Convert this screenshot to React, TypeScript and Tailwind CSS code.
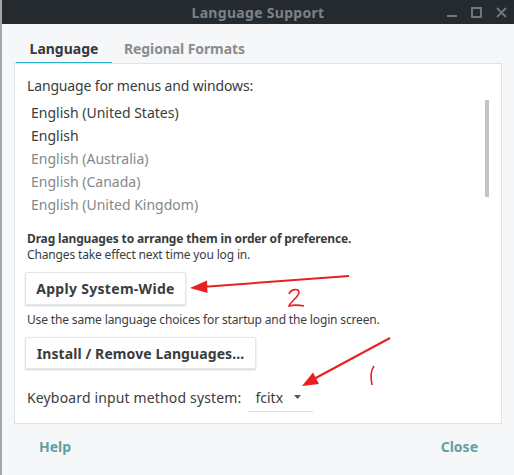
import { useState } from "react";

const languages = [
  { name: "English (United States)", active: true },
  { name: "English", active: true },
  { name: "English (Australia)", active: false },
  { name: "English (Canada)", active: false },
  { name: "English (United Kingdom)", active: false },
];

function WindowControls() {
  return (
    <div className="absolute right-0 top-0 h-[24px] flex items-center gap-[14px] pr-[7px]">
      <svg width="10" height="10" viewBox="0 0 10 10">
        <rect x="0" y="8" width="10" height="2" fill="#6f767b" />
      </svg>
      <svg width="11" height="11" viewBox="0 0 11 11">
        <rect x="1" y="1" width="9" height="9" fill="none" stroke="#6f767b" strokeWidth="2" />
      </svg>
      <svg width="11" height="11" viewBox="0 0 11 11">
        <path d="M1 1 L10 10 M10 1 L1 10" stroke="#6f767b" strokeWidth="2" />
      </svg>
    </div>
  );
}

function Annotations() {
  return (
    <svg
      className="absolute inset-0 pointer-events-none"
      width="514"
      height="475"
      viewBox="0 0 514 475"
    >
      <path d="M347 276 L200 287" stroke="#e8201f" strokeWidth="2" fill="none" />
      <polygon points="188,288 205,280.5 205.5,293" fill="#e8201f" />
      <path
        d="M287 294 C289 289, 297 288, 297 292 C297 297, 288 302, 287 306 C291 305, 297 305, 302 306"
        stroke="#e8201f"
        strokeWidth="1.6"
        fill="none"
      />
      <path d="M388 338 L310 380" stroke="#e8201f" strokeWidth="2" fill="none" />
      <polygon points="300,386 311,372.5 317,384" fill="#e8201f" />
      <path
        d="M372 366 C369 370, 368 375, 370 385"
        stroke="#e8201f"
        strokeWidth="1.6"
        fill="none"
      />
    </svg>
  );
}

export default function App() {
  const [tab, setTab] = useState("language");

  return (
    <div
      className="relative w-[514px] h-[475px] overflow-hidden bg-[#f6f7f9] border-l-2 border-[#a3a6a9] flex flex-col text-[#3a3c3e]"
      style={{ fontFamily: '"Noto Sans", "Open Sans", sans-serif' }}
    >
      {/* title bar */}
      <div className="relative h-[24px] shrink-0 bg-[#252a2f] flex items-center justify-center">
        <span className="text-[14px] font-bold text-[#7c8388] tracking-[0.3px]">
          Language Support
        </span>
        <WindowControls />
      </div>

      {/* tabs */}
      <div className="flex pt-[10px] pl-[14px]">
        <button
          onClick={() => setTab("language")}
          className={`w-[96px] h-[30px] pt-[1px] flex items-center justify-center text-[14px] font-bold border-b-2 ${
            tab === "language" ? "border-[#2fb0c6] text-[#35383b]" : "border-transparent text-[#8a8d90]"
          }`}
        >
          Language
        </button>
        <button
          onClick={() => setTab("regional")}
          className={`h-[30px] pt-[1px] pl-[12px] pr-[12px] flex items-center text-[14px] font-bold tracking-[-0.1px] border-b-2 ${
            tab === "regional" ? "border-[#2fb0c6] text-[#35383b]" : "border-transparent text-[#8a8d90]"
          }`}
        >
          Regional Formats
        </button>
      </div>

      {/* panel */}
      <div className="mx-[12px] mt-[-1px] bg-white border border-[#e0e2e4] pl-[12px] pb-[12px]">
        <div className="mt-[11px] h-[20px] flex items-center text-[14px] tracking-[-0.15px]">
          Language for menus and windows:
        </div>

        <div className="mt-[5px] flex">
          <div className="flex-1 pl-[4px] pt-[1px]">
            {languages.map((l) => (
              <div
                key={l.name}
                className={`h-[23px] flex items-center text-[14px] ${
                  l.active ? "text-[#3a3c3e]" : "text-[#85888b]"
                }`}
              >
                {l.name}
              </div>
            ))}
          </div>
          <div className="w-[4px] mr-[12px] h-[97px] bg-[#c4c5c6]" />
        </div>

        <div className="mt-[15px] h-[16px] flex items-center text-[12px] font-bold tracking-[-0.15px]">
          Drag languages to arrange them in order of preference.
        </div>
        <div className="h-[16px] flex items-center text-[12px] tracking-[-0.15px]">
          Changes take effect next time you log in.
        </div>

        <button className="mt-[9px] ml-[-2px] h-[33px] w-[161px] bg-white rounded-[2px] border border-[#e4e6e8] shadow-[0_1px_2px_rgba(0,0,0,0.18)] text-[14px] font-bold text-[#3a3c3e] tracking-[0.3px]">
          Apply System-Wide
        </button>

        <div className="mt-[7px] h-[16px] flex items-center text-[12px] tracking-[-0.15px]">
          Use the same language choices for startup and the login screen.
        </div>

        <button className="mt-[9px] ml-[-2px] h-[32px] w-[231px] bg-white rounded-[2px] border border-[#e4e6e8] shadow-[0_1px_2px_rgba(0,0,0,0.18)] text-[14px] font-bold text-[#3a3c3e] tracking-[0.1px]">
          Install / Remove Languages...
        </button>

        <div className="mt-[14px] h-[28px] pt-[1px] flex items-center text-[14px]">
          <span className="tracking-[0.15px]">Keyboard input method system:</span>
          <div className="ml-[7px] w-[65px] h-[28px] flex items-center border-b border-[#dcdee0] pl-[7px]">
            <span className="text-[14px]">fcitx</span>
            <svg className="ml-[11px]" width="7" height="4" viewBox="0 0 7 4">
              <polygon points="0,0 7,0 3.5,4" fill="#55595c" />
            </svg>
          </div>
        </div>
      </div>

      {/* footer */}
      <div className="h-[44px] pt-[1px] flex items-center justify-between pl-[37px] pr-[36px] text-[14px] font-bold text-[#5fa2a4]">
        <span>Help</span>
        <span>Close</span>
      </div>

      <Annotations />
    </div>
  );
}
